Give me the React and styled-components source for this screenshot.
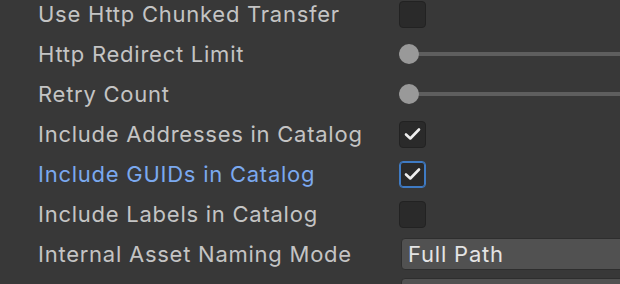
import React from "react";
import styled, { createGlobalStyle } from "styled-components";

const GlobalStyle = createGlobalStyle`
  html, body {
    margin: 0;
    padding: 0;
    background: #383838;
    overflow: hidden;
  }
`;

const Panel = styled.div`
  width: 620px;
  height: 284px;
  overflow: hidden;
  background: #383838;
  font-family: Inter, "Noto Sans", sans-serif;
`;

const List = styled.div`
  display: flex;
  flex-direction: column;
  margin-top: -6px;
`;

const Row = styled.div`
  display: grid;
  grid-template-columns: 361px 1fr;
  align-items: center;
  height: 40px;
  padding-left: 38px;
`;

const Label = styled.span`
  font-size: 22px;
  letter-spacing: 0.75px;
  color: ${(p) => (p.$focused ? "#7ba9ef" : "#c4c4c4")};
  white-space: nowrap;
`;

const Box = styled.div`
  width: 27px;
  height: 27px;
  box-sizing: border-box;
  border-radius: 4px;
  background: #2a2a2a;
  border: 1px solid ${(p) => (p.$focused ? "#3f7bc4" : "#222222")};
  ${(p) => p.$focused && "box-shadow: inset 0 0 0 1px #3f7bc4;"}
  display: flex;
  align-items: center;
  justify-content: center;
`;

const Slider = styled.div`
  position: relative;
  height: 20px;
  display: flex;
  align-items: center;
  margin-right: -40px;
`;

const Track = styled.div`
  flex: 1;
  height: 4px;
  background: #5e5e5e;
`;

const Thumb = styled.div`
  position: absolute;
  left: 0;
  top: 0;
  width: 20px;
  height: 20px;
  border-radius: 50%;
  background: #999999;
`;

const Dropdown = styled.div`
  height: 32px;
  box-sizing: border-box;
  margin-left: 2px;
  margin-right: -10px;
  border: 1px solid #2e2e2e;
  border-radius: 4px;
  background: #515151;
  color: #e4e4e4;
  font-size: 22px;
  letter-spacing: 0.8px;
  display: flex;
  align-items: center;
  padding-left: 6px;
`;

const Check = () => (
  <svg width="17" height="14" viewBox="0 0 17 14">
    <path
      d="M2 7.5 L6.3 11.5 L15 2.5"
      fill="none"
      stroke="#eeeeee"
      strokeWidth="2.6"
      strokeLinecap="round"
      strokeLinejoin="round"
    />
  </svg>
);

const Checkbox = ({ checked, focused }) => (
  <Box $focused={focused}>{checked && <Check />}</Box>
);

const SliderField = () => (
  <Slider>
    <Track />
    <Thumb />
  </Slider>
);

const fields = [
  { label: "Use Http Chunked Transfer", type: "check" },
  { label: "Http Redirect Limit", type: "slider" },
  { label: "Retry Count", type: "slider" },
  { label: "Include Addresses in Catalog", type: "check", checked: true },
  { label: "Include GUIDs in Catalog", type: "check", checked: true, focused: true },
  { label: "Include Labels in Catalog", type: "check" },
  { label: "Internal Asset Naming Mode", type: "dropdown", value: "Full Path" },
  { label: "", type: "dropdown", value: "" },
];

export default function App() {
  return (
    <>
      <GlobalStyle />
      <Panel>
        <List>
          {fields.map((f, i) => (
            <Row key={i}>
              <Label $focused={f.focused}>{f.label}</Label>
              <div>
                {f.type === "check" && (
                  <Checkbox checked={f.checked} focused={f.focused} />
                )}
                {f.type === "slider" && <SliderField />}
                {f.type === "dropdown" && <Dropdown>{f.value}</Dropdown>}
              </div>
            </Row>
          ))}
        </List>
      </Panel>
    </>
  );
}
